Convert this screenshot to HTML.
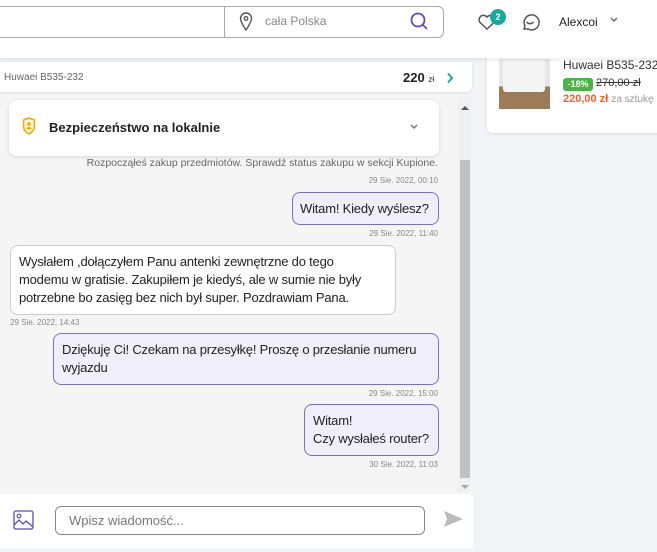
<!DOCTYPE html>
<html><head><meta charset="utf-8"><style>
*{box-sizing:border-box;margin:0;padding:0}
body{width:657px;height:552px;overflow:hidden;background:#f2f4f8;font-family:"Liberation Sans","DejaVu Sans",sans-serif;position:relative;color:#222}
.a{position:absolute}
.hdr{left:0;top:0;width:657px;height:58px;background:#fff;box-shadow:0 2px 4px rgba(0,0,0,.08);z-index:5}
.z{z-index:6}
.srch{left:-10px;top:6px;width:454px;height:32px;border:1px solid #aaa;border-radius:6px;background:#fff}
.ts{font-size:8px;color:#888}
.bub{border:1px solid #7b6fc4;background:#efeefa;border-radius:8px;font-size:13px;line-height:18px;padding:7px 8px;color:#222;white-space:nowrap;letter-spacing:-0.2px}
</style></head><body>
<div class="a hdr"></div>
<div class="a srch z"></div>
<div class="a z" style="left:224px;top:7px;width:1px;height:30px;background:#aaa"></div>
<svg class="a z" style="left:239px;top:12px" width="14" height="19" viewBox="0 0 14 19"><path d="M7 18C3 12 1.5 9 1.5 6.5a5.5 5.5 0 0 1 11 0C12.5 9 11 12 7 18z" fill="none" stroke="#555" stroke-width="1.4"/><circle cx="7" cy="6.5" r="1.8" fill="none" stroke="#555" stroke-width="1.3"/></svg>
<div class="a z" style="left:265px;top:14px;font-size:12px;color:#888">cała Polska</div>
<svg class="a z" style="left:409px;top:11px" width="20" height="20" viewBox="0 0 20 20"><circle cx="9" cy="9" r="6.5" fill="none" stroke="#5a4cc0" stroke-width="1.8"/><path d="M13.5 13.5L18 18" stroke="#5a4cc0" stroke-width="1.8"/></svg>
<svg class="a z" style="left:477px;top:13px" width="20" height="18" viewBox="0 0 20 18"><path d="M10 16L3 9.5A4 4 0 0 1 10 4a4 4 0 0 1 7 5.5z" fill="none" stroke="#555" stroke-width="1.5"/></svg>
<div class="a z" style="left:490px;top:9px;width:16px;height:16px;border-radius:50%;background:#1aa7a0;color:#fff;font-size:9px;font-weight:bold;text-align:center;line-height:16px">2</div>
<svg class="a z" style="left:520px;top:12px" width="20" height="20" viewBox="0 0 20 20"><path d="M4 17L5 14A7.5 7.5 0 1 1 8 17z" fill="none" stroke="#555" stroke-width="1.5"/><path d="M6.5 10q3.5 3.5 7 0" fill="none" stroke="#555" stroke-width="1.5"/></svg>
<div class="a z" style="left:559px;top:15px;font-size:12px;color:#222">Alexcoi</div>
<svg class="a z" style="left:609px;top:16px" width="10" height="8" viewBox="0 0 10 8"><path d="M2 2l3 3 3-3" fill="none" stroke="#666" stroke-width="1.4"/></svg>

<div class="a" style="left:0;top:62px;width:472px;height:30px;background:#fff;border-radius:0 0 6px 0;box-shadow:0 1px 3px rgba(0,0,0,.08)"></div>
<div class="a" style="left:4px;top:72px;font-size:10px;color:#666">Huwaei B535-232</div>
<div class="a" style="left:403px;top:70px;font-size:13px;font-weight:bold;color:#222">220 <span style="font-size:8px;font-weight:normal">zł</span></div>
<svg class="a" style="left:446px;top:72px" width="8" height="12" viewBox="0 0 8 12"><path d="M2 1.5l4 4.5-4 4.5" fill="none" stroke="#1aa7a0" stroke-width="2"/></svg>

<div class="a" style="left:0;top:95px;width:472px;height:398px;background:#f5f5f5"></div>
<div class="a" style="left:458px;top:97px;width:13px;height:395px;background:#f0f0f0"></div>
<div class="a" style="left:460px;top:160px;width:10px;height:318px;background:#c1c1c1"></div>
<div class="a" style="left:461px;top:106px;width:0;height:0;border-left:4px solid transparent;border-right:4px solid transparent;border-bottom:4px solid #555"></div>
<div class="a" style="left:461px;top:485px;width:0;height:0;border-left:4px solid transparent;border-right:4px solid transparent;border-top:4px solid #aaa"></div>

<div class="a" style="left:9px;top:100px;width:430px;height:56px;background:#fff;border-radius:8px;box-shadow:0 1px 4px rgba(0,0,0,.12)"></div>
<svg class="a" style="left:22px;top:117px" width="14" height="18" viewBox="0 0 14 18"><path d="M7 1L1.5 3v5.5C1.5 12.5 4 15.5 7 17c3-1.5 5.5-4.5 5.5-8.5V3z" fill="#fff4d6" stroke="#f4a800" stroke-width="1.5"/><circle cx="7" cy="7" r="1.8" fill="#f4a800"/><path d="M4 12q3-4 6 0" fill="#f4a800"/></svg>
<div class="a" style="left:49px;top:120px;font-size:13px;font-weight:bold;color:#222">Bezpieczeństwo na lokalnie</div>
<svg class="a" style="left:409px;top:123px" width="10" height="8" viewBox="0 0 10 8"><path d="M2 2l3 3 3-3" fill="none" stroke="#777" stroke-width="1.5"/></svg>

<div class="a" style="right:219px;top:157px;font-size:10.5px;color:#666;white-space:nowrap">Rozpocząłeś zakup przedmiotów. Sprawdź status zakupu w sekcji Kupione.</div>
<div class="a ts" style="right:219px;top:176px">29 Sie. 2022, 00:10</div>
<div class="a bub" style="left:292px;top:192px;width:147px;height:33px;padding:7px 7px">Witam! Kiedy wyślesz?</div>
<div class="a ts" style="right:219px;top:229px">29 Sie. 2022, 11:40</div>
<div class="a bub" style="left:10px;top:245px;width:386px;height:70px;background:#fff;border-color:#ccc">Wysłałem ,dołączyłem Panu antenki zewnętrzne do tego<br>modemu w gratisie. Zakupiłem je kiedyś, ale w sumie nie były<br>potrzebne bo zasięg bez nich był super. Pozdrawiam Pana.</div>
<div class="a ts" style="left:10px;top:318px">29 Sie. 2022, 14:43</div>
<div class="a bub" style="left:53px;top:333px;width:386px;height:52px">Dziękuję Ci! Czekam na przesyłkę! Proszę o przesłanie numeru<br>wyjazdu</div>
<div class="a ts" style="right:219px;top:389px">29 Sie. 2022, 15:00</div>
<div class="a bub" style="left:304px;top:404px;width:135px;height:52px">Witam!<br>Czy wysłałeś router?</div>
<div class="a ts" style="right:219px;top:460px">30 Sie. 2022, 11:03</div>

<div class="a" style="left:0;top:494px;width:473px;height:54px;background:#fff"></div>
<svg class="a" style="left:13px;top:510px" width="21" height="20" viewBox="0 0 21 20"><rect x="1" y="1" width="19" height="18" rx="2" fill="none" stroke="#5a4cc0" stroke-width="1.3"/><circle cx="6" cy="6" r="1.8" fill="none" stroke="#5a4cc0" stroke-width="1.2"/><path d="M1 15l5-5 4 4 3-3 7 6" fill="none" stroke="#5a4cc0" stroke-width="1.3"/></svg>
<div class="a" style="left:55px;top:506px;width:370px;height:29px;border:1px solid #888;border-radius:6px;background:#fff"></div>
<div class="a" style="left:69px;top:513px;font-size:13px;color:#777">Wpisz wiadomość...</div>
<svg class="a" style="left:443px;top:510px" width="21" height="18" viewBox="0 0 21 18"><path d="M1 1l19 8-19 8 3-8z" fill="#bbb"/></svg>

<div class="a" style="left:487px;top:30px;width:180px;height:103px;background:#fff;border-radius:6px;box-shadow:0 1px 4px rgba(0,0,0,.1)"></div>
<div class="a" style="left:499px;top:59px;width:51px;height:50px;background:linear-gradient(#e8e8e8 0 55%,#9c7b5a 55%)"></div>
<div class="a" style="left:503px;top:60px;width:42px;height:32px;background:#f4f4f4;border-radius:3px"></div>
<div class="a" style="left:563px;top:58px;font-size:12px;color:#333;white-space:nowrap">Huwaei B535-232</div>
<div class="a" style="left:563px;top:78px;width:30px;height:13px;background:#4bb543;border-radius:3px;color:#fff;font-size:9px;font-weight:bold;text-align:center;line-height:13px">-18%</div>
<div class="a" style="left:596px;top:77px;font-size:11px;color:#333;text-decoration:line-through;white-space:nowrap">270,00 zł</div>
<div class="a" style="left:563px;top:93px;font-size:11px;color:#ff5a1f;font-weight:bold;white-space:nowrap">220,00 zł <span style="font-weight:normal;color:#999;font-size:10px">za sztukę</span></div>
</body></html>
